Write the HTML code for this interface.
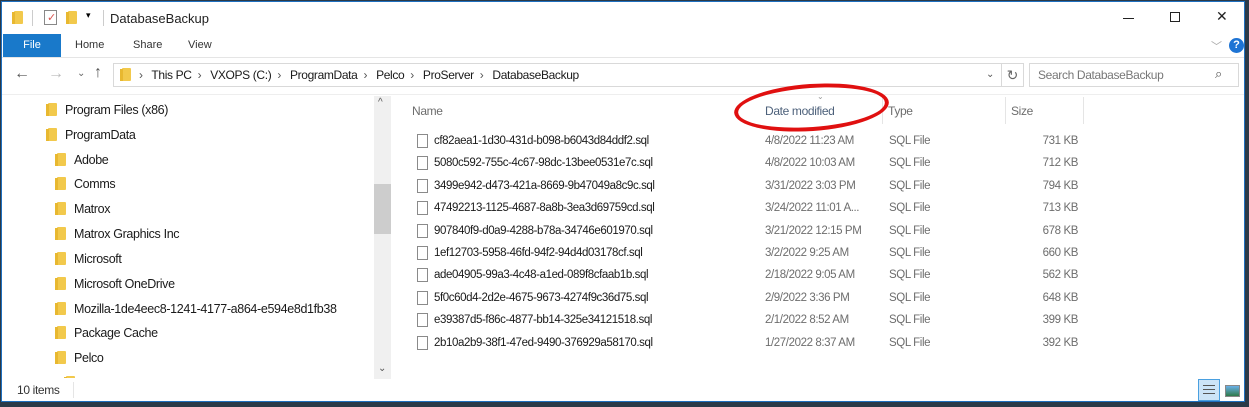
<!DOCTYPE html>
<html><head><meta charset="utf-8"><style>
*{margin:0;padding:0;box-sizing:border-box}
body{width:1249px;height:407px;background:#2b3a48;position:relative;overflow:hidden;font-family:"Liberation Sans",sans-serif;font-size:12px;color:#000}
.a{position:absolute;white-space:nowrap}
#win{position:absolute;left:1px;top:1px;width:1244px;height:401px;background:#fff;border:1px solid #1e6fbf;overflow:hidden}
.fold{position:absolute;width:9px;height:13px;background:#f2c94c;border-radius:1px}
.fold:before{content:"";position:absolute;left:-2px;top:1px;width:3px;height:12px;background:#e8b830}
.t{font-size:12px;letter-spacing:-0.35px;color:#1a1a1a}
.doc{position:absolute;width:11px;height:14px;border:1px solid #8a8a8a;background:#fff}
.g{color:#6d6d6d}
</style></head><body>
<div id="win">
<div class="fold" style="left:12px;top:9px"></div>
<div class="a" style="left:30px;top:8px;width:1px;height:16px;background:#ccc"></div>
<div class="a" style="left:42px;top:8px;width:13px;height:15px;border:1px solid #888;background:#fff"></div>
<div class="a" style="left:45px;top:9px;color:#d9534f;font-size:11px">✓</div>
<div class="fold" style="left:66px;top:9px"></div>
<div class="a" style="left:84px;top:8px;font-size:9px">▾</div>
<div class="a" style="left:101px;top:8px;width:1px;height:16px;background:#ccc"></div>
<div class="a" style="left:108px;top:9px;font-size:13px;color:#222">DatabaseBackup</div>
<div class="a" style="left:1121px;top:16px;width:11px;height:1px;background:#222"></div>
<div class="a" style="left:1168px;top:10px;width:10px;height:10px;border:1px solid #222"></div>
<div class="a" style="left:1214px;top:6px;font-size:14px;color:#222">✕</div>
<div class="a" style="left:1px;top:32px;width:58px;height:23px;background:#1979ca;color:#fff;text-align:center;line-height:23px;font-size:11px">File</div>
<div class="a" style="left:73px;top:37px;font-size:11px;color:#333">Home</div>
<div class="a" style="left:131px;top:37px;font-size:11px;color:#333">Share</div>
<div class="a" style="left:186px;top:37px;font-size:11px;color:#333">View</div>
<div class="a" style="left:1209px;top:36px;font-size:11px;color:#aaa">﹀</div>
<div class="a" style="left:1227px;top:36px;width:15px;height:15px;border-radius:50%;background:#1e74d4;color:#fff;font-size:11px;font-weight:bold;text-align:center;line-height:15px">?</div>
<div class="a" style="left:0;top:55px;width:1244px;height:1px;background:#e5e5e5"></div>
<div class="a" style="left:12px;top:63px;font-size:16px;color:#555">←</div>
<div class="a" style="left:46px;top:63px;font-size:16px;color:#bbb">→</div>
<div class="a" style="left:75px;top:66px;font-size:10px;color:#666">⌄</div>
<div class="a" style="left:92px;top:62px;font-size:16px;color:#555">↑</div>
<div class="a" style="left:111px;top:61px;width:889px;height:24px;border:1px solid #d9d9d9"></div>
<div class="fold" style="left:120px;top:66px"></div>
<div class="a t" style="left:137px;top:66px;color:#555">›&nbsp;&nbsp; <span style="color:#1a1a1a">This PC</span> &nbsp;›&nbsp;&nbsp; <span style="color:#1a1a1a">VXOPS (C:)</span> &nbsp;›&nbsp;&nbsp; <span style="color:#1a1a1a">ProgramData</span> &nbsp;›&nbsp;&nbsp; <span style="color:#1a1a1a">Pelco</span> &nbsp;›&nbsp;&nbsp; <span style="color:#1a1a1a">ProServer</span> &nbsp;›&nbsp;&nbsp; <span style="color:#1a1a1a">DatabaseBackup</span></div>
<div class="a" style="left:984px;top:67px;font-size:10px;color:#555">⌄</div>
<div class="a" style="left:999px;top:61px;width:23px;height:24px;border:1px solid #d9d9d9;text-align:center;line-height:22px;color:#666;font-size:14px">↻</div>
<div class="a" style="left:1027px;top:61px;width:210px;height:24px;border:1px solid #d9d9d9"></div>
<div class="a t g" style="left:1036px;top:66px;color:#777">Search DatabaseBackup</div>
<div class="a" style="left:1213px;top:64px;font-size:13px;color:#555">⌕</div>
<div class="a" style="left:0;top:92px;width:1244px;height:1px;background:#eee"></div>
<div class="fold" style="left:46px;top:101px"></div><div class="a t" style="left:63px;top:101px;font-size:12.5px">Program Files (x86)</div>
<div class="fold" style="left:46px;top:126px"></div><div class="a t" style="left:63px;top:126px;font-size:12.5px">ProgramData</div>
<div class="fold" style="left:55px;top:151px"></div><div class="a t" style="left:72px;top:151px;font-size:12.5px">Adobe</div>
<div class="fold" style="left:55px;top:175px"></div><div class="a t" style="left:72px;top:175px;font-size:12.5px">Comms</div>
<div class="fold" style="left:55px;top:200px"></div><div class="a t" style="left:72px;top:200px;font-size:12.5px">Matrox</div>
<div class="fold" style="left:55px;top:225px"></div><div class="a t" style="left:72px;top:225px;font-size:12.5px">Matrox Graphics Inc</div>
<div class="fold" style="left:55px;top:250px"></div><div class="a t" style="left:72px;top:250px;font-size:12.5px">Microsoft</div>
<div class="fold" style="left:55px;top:275px"></div><div class="a t" style="left:72px;top:275px;font-size:12.5px">Microsoft OneDrive</div>
<div class="fold" style="left:55px;top:300px"></div><div class="a t" style="left:72px;top:300px;font-size:12.5px">Mozilla-1de4eec8-1241-4177-a864-e594e8d1fb38</div>
<div class="fold" style="left:55px;top:324px"></div><div class="a t" style="left:72px;top:324px;font-size:12.5px">Package Cache</div>
<div class="fold" style="left:55px;top:349px"></div><div class="a t" style="left:72px;top:349px;font-size:12.5px">Pelco</div>
<div class="a" style="left:60px;top:373px;width:200px;height:3px;overflow:hidden"><div class="fold" style="left:4px;top:1px"></div></div>
<div class="a" style="left:372px;top:94px;width:17px;height:283px;background:#f0f0f0"></div>
<div class="a" style="left:372px;top:182px;width:17px;height:50px;background:#cdcdcd"></div>
<div class="a" style="left:376px;top:95px;font-size:10px;color:#555">^</div>
<div class="a" style="left:376px;top:361px;font-size:10px;color:#555">⌄</div>
<div class="a t g" style="left:410px;top:102px">Name</div>
<div class="a" style="left:815px;top:90px;font-size:8px;color:#999">⌄</div>
<div class="a t" style="left:763px;top:102px;color:#4c607a">Date modified</div>
<div class="a t g" style="left:886px;top:102px">Type</div>
<div class="a t g" style="left:1009px;top:102px">Size</div>
<div class="a" style="left:880px;top:95px;width:1px;height:27px;background:#e5e5e5"></div>
<div class="a" style="left:1003px;top:95px;width:1px;height:27px;background:#e5e5e5"></div>
<div class="a" style="left:1081px;top:95px;width:1px;height:27px;background:#e5e5e5"></div>
<div class="a" style="left:732px;top:82px;width:155px;height:47px;border:4px solid #e01010;border-radius:50%;transform:rotate(-4deg)"></div>
<div id="rows"></div>
<div class="a t" style="left:15px;top:381px;color:#333">10 items</div>
<div class="a" style="left:71px;top:380px;width:1px;height:16px;background:#e5e5e5"></div>
<div class="a" style="left:1196px;top:377px;width:22px;height:22px;background:#cce4f7;border:1px solid #4aa0e0"></div>
<div class="a" style="left:1201px;top:383px;width:12px;height:1px;background:#555;box-shadow:0 4px 0 #555,0 8px 0 #555"></div>
<div class="a" style="left:1223px;top:383px;width:15px;height:12px;border:1px solid #888;background:linear-gradient(#6ab0e8,#2f7a4a)"></div>
</div>
<script>
var d=[["cf82aea1-1d30-431d-b098-b6043d84ddf2.sql","4/8/2022 11:23 AM","731 KB"],
["5080c592-755c-4c67-98dc-13bee0531e7c.sql","4/8/2022 10:03 AM","712 KB"],
["3499e942-d473-421a-8669-9b47049a8c9c.sql","3/31/2022 3:03 PM","794 KB"],
["47492213-1125-4687-8a8b-3ea3d69759cd.sql","3/24/2022 11:01 A...","713 KB"],
["907840f9-d0a9-4288-b78a-34746e601970.sql","3/21/2022 12:15 PM","678 KB"],
["1ef12703-5958-46fd-94f2-94d4d03178cf.sql","3/2/2022 9:25 AM","660 KB"],
["ade04905-99a3-4c48-a1ed-089f8cfaab1b.sql","2/18/2022 9:05 AM","562 KB"],
["5f0c60d4-2d2e-4675-9673-4274f9c36d75.sql","2/9/2022 3:36 PM","648 KB"],
["e39387d5-f86c-4877-bb14-325e34121518.sql","2/1/2022 8:52 AM","399 KB"],
["2b10a2b9-38f1-47ed-9490-376929a58170.sql","1/27/2022 8:37 AM","392 KB"]];
var h="";d.forEach(function(r,i){var y=133+i*22.4;
h+='<div class="doc" style="left:415px;top:'+(y-1)+'px"></div>'+
'<div class="a t" style="left:432px;top:'+y+'px;font-size:11.5px;letter-spacing:-0.4px">'+r[0]+'</div>'+
'<div class="a t g" style="left:763px;top:'+y+'px;font-size:11.5px;letter-spacing:-0.4px">'+r[1]+'</div>'+
'<div class="a t g" style="left:887px;top:'+y+'px;font-size:11.5px;letter-spacing:-0.4px">SQL File</div>'+
'<div class="a t g" style="right:166px;top:'+y+'px;font-size:11.5px;letter-spacing:-0.4px">'+r[2]+'</div>';});
document.getElementById("rows").innerHTML=h;
</script>
</body></html>
